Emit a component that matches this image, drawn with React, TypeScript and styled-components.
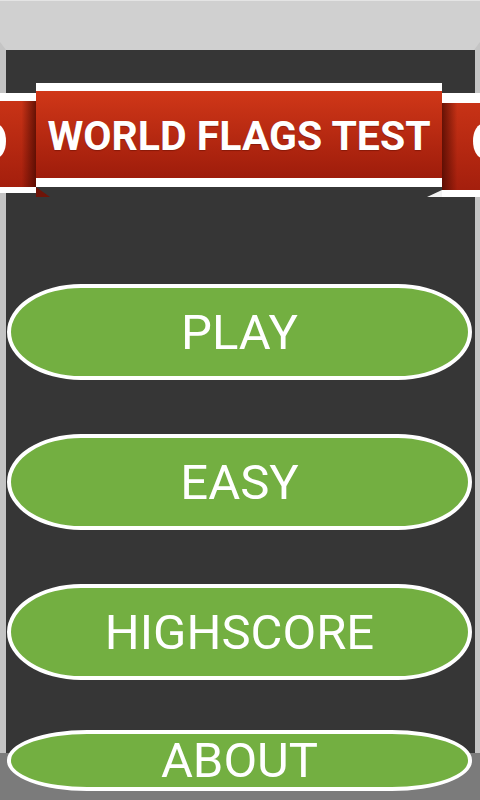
import React from "react";
import styled, { createGlobalStyle } from "styled-components";

const Global = createGlobalStyle`
  html, body { margin: 0; padding: 0; background: #c3c3c3; }
  body { font-family: Roboto, "Liberation Sans", Arial, sans-serif; }
`;

const Screen = styled.div`
  width: 480px;
  height: 800px;
  overflow: hidden;
  display: flex;
  flex-direction: column;
  background: linear-gradient(to bottom, #c4c4c4 0, #c4c4c4 753px, #7b7b7b 753px);
`;

const TopBar = styled.header`
  height: 50px;
  flex-shrink: 0;
  box-sizing: border-box;
  background: #d0d0d0;
  border-top: 1px solid #e4e4e4;
  clip-path: polygon(0 0, 100% 0, 100% 42px, 474px 50px, 6px 50px, 0 42px);
`;

const Panel = styled.main`
  height: 703px;
  flex-shrink: 0;
  box-sizing: border-box;
  margin: 0 5px 0 6px;
  padding-top: 33px;
  background: #363636;
  display: flex;
  flex-direction: column;
`;

const Ribbon = styled.div`
  display: flex;
  height: 115px;
  margin: 0 -5px 0 -6px;
`;

const Tail = styled.div<{ $side: "left" | "right" }>`
  position: relative;
  flex-shrink: 0;
  margin-top: 10px;
  width: ${(p) => (p.$side === "left" ? 36 : 38)}px;
  height: ${(p) => (p.$side === "left" ? 100 : 104)}px;
  background:
    linear-gradient(
      to bottom,
      #fff 0,
      #fff ${(p) => (p.$side === "left" ? 8 : 10)}px,
      transparent ${(p) => (p.$side === "left" ? 8 : 10)}px,
      transparent calc(100% - ${(p) => (p.$side === "left" ? 6 : 7)}px),
      #fff calc(100% - ${(p) => (p.$side === "left" ? 6 : 7)}px)
    ),
    linear-gradient(
      to ${(p) => (p.$side === "left" ? "right" : "left")},
      transparent 60%,
      rgba(70, 8, 0, 0.75) 100%
    ),
    linear-gradient(to bottom, #cc3517, #a11d0c);

  &::before {
    content: "";
    position: absolute;
    top: 31px;
    ${(p) => (p.$side === "left" ? "left: -13px;" : "right: -12px;")}
    width: 19px;
    height: 34px;
    border-radius: 50%;
    background: #fff;
  }

  &::after {
    content: "";
    position: absolute;
    top: ${(p) => (p.$side === "left" ? 94 : 97)}px;
    ${(p) => (p.$side === "left" ? "left: 36px;" : "right: 38px;")}
    width: ${(p) => (p.$side === "left" ? 14 : 15)}px;
    height: ${(p) => (p.$side === "left" ? 10 : 7)}px;
    background: ${(p) => (p.$side === "left" ? "#6e1408" : "#f2f2f2")};
    clip-path: ${(p) =>
      p.$side === "left"
        ? "polygon(0 0, 100% 100%, 0 100%)"
        : "polygon(100% 0, 100% 100%, 0 100%)"};
  }
`;

const Band = styled.div`
  flex: 1;
  height: 104px;
  box-sizing: border-box;
  border-top: 8px solid #fff;
  border-bottom: 9px solid #fff;
  background: linear-gradient(to bottom, #d03718, #9e1c0b);
  display: flex;
  align-items: center;
  justify-content: center;
  padding-top: 4px;
`;

const Title = styled.h1`
  margin: 0;
  font-family: Roboto, "Liberation Sans", Arial, sans-serif;
  font-weight: 700;
  font-size: 41px;
  line-height: 1;
  color: #fff;
  white-space: nowrap;
  text-shadow: 0 1px 1px rgba(80, 10, 0, 0.4);
`;

const Menu = styled.nav`
  display: flex;
  flex-direction: column;
  gap: 54px;
  margin: 87px 3px 0 1px;
  position: relative;
  z-index: 1;
`;

const MenuButton = styled.button<{ $compact?: boolean }>`
  height: ${(p) => (p.$compact ? 61 : 96)}px;
  margin-top: ${(p) => (p.$compact ? -4 : 0)}px;
  flex-shrink: 0;
  box-sizing: border-box;
  border: 4px solid #fff;
  border-radius: ${(p) => (p.$compact ? "80px / 30px" : "74px / 48px")};
  background: #73af41;
  color: #fff;
  font-family: Roboto, "Liberation Sans", Arial, sans-serif;
  font-weight: 400;
  font-size: 49px;
  line-height: 1;
  padding: 0;
  display: flex;
  align-items: center;
  justify-content: center;
  cursor: pointer;
`;

export default function App() {
  return (
    <>
      <Global />
      <Screen>
        <TopBar />
        <Panel>
          <Ribbon>
            <Tail $side="left" />
            <Band>
              <Title>WORLD FLAGS TEST</Title>
            </Band>
            <Tail $side="right" />
          </Ribbon>
          <Menu>
            <MenuButton>PLAY</MenuButton>
            <MenuButton>EASY</MenuButton>
            <MenuButton>HIGHSCORE</MenuButton>
            <MenuButton $compact>ABOUT</MenuButton>
          </Menu>
        </Panel>
      </Screen>
    </>
  );
}
